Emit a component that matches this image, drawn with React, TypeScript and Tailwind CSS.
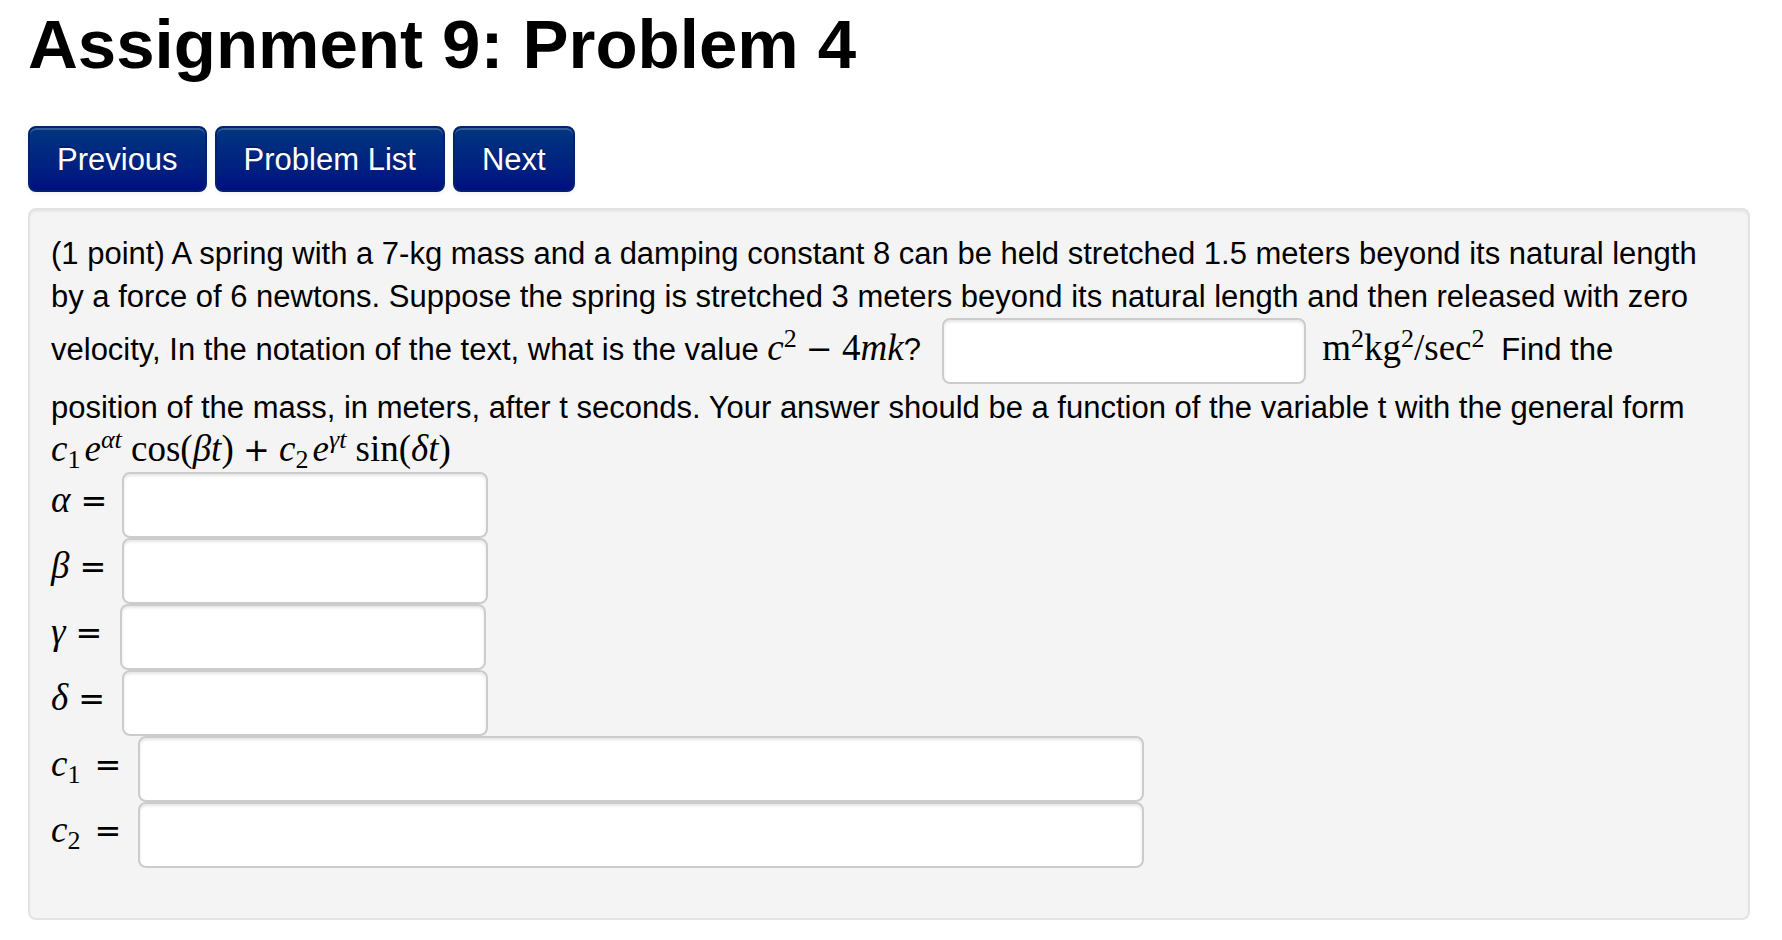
import type { ReactNode } from "react";

const navLinks = ["Previous", "Problem List", "Next"];

const fields = [
  { id: "alpha", symbol: "α", labelWidth: "w-[71px]", inputWidth: "w-[366px]" },
  { id: "beta", symbol: "β", labelWidth: "w-[71px]", inputWidth: "w-[366px]" },
  { id: "gamma", symbol: "γ", labelWidth: "w-[69px]", inputWidth: "w-[366px]" },
  { id: "delta", symbol: "δ", labelWidth: "w-[71px]", inputWidth: "w-[366px]" },
  { id: "c1", symbol: "c", sub: "1", labelWidth: "w-[87px]", inputWidth: "w-[1006px]" },
  { id: "c2", symbol: "c", sub: "2", labelWidth: "w-[87px]", inputWidth: "w-[1006px]" }
];

const inputStyle =
  "h-[66px] rounded-lg border-2 border-[#cccccc] bg-white px-3 shadow-[inset_0_2px_3px_rgba(0,0,0,0.1)] outline-none focus:border-[#52a8ec]";

function MathText({ children }: { children: ReactNode }) {
  return (
    <span className="whitespace-nowrap font-['Liberation_Serif',serif] text-[37px] leading-none">{children}</span>
  );
}

// Plus, minus and equals signs
function Op({ children }: { children: ReactNode }) {
  return <span className="font-['DejaVu_Sans',sans-serif] text-[32px] leading-none">{children}</span>;
}

function Sup({ children }: { children: ReactNode }) {
  return <sup className="text-[26px]">{children}</sup>;
}

function Sub({ children }: { children: ReactNode }) {
  return <sub className="text-[26px]">{children}</sub>;
}

export default function App() {
  return (
    <main className="px-7 pb-5 font-['Liberation_Sans',Arial,sans-serif] text-[31px] leading-[43px] text-black">
      <h1 className="pt-1 text-[69px] font-bold leading-[82px]">Assignment 9: Problem 4</h1>

      <nav className="mt-10 flex gap-2">
        {navLinks.map((label) => (
          <button
            key={label}
            className="h-[66px] rounded-lg border-2 border-[#00246b] bg-linear-to-b from-[#003580] to-[#000d80] px-[27px] text-white shadow-[inset_0_2px_0_rgba(255,255,255,0.2),0_2px_4px_rgba(0,0,0,0.05)] [text-shadow:0_-2px_0_rgba(0,0,0,0.25)]"
          >
            {label}
          </button>
        ))}
      </nav>

      <form className="mt-4 mr-1 rounded-lg border-2 border-[#e3e3e3] bg-[#f4f4f4] px-[21px] pt-[22px] pb-[50px] shadow-[inset_0_2px_2px_rgba(0,0,0,0.05)]">
        <p>
          (1 point) A spring with a 7-kg mass and a damping constant 8 can be held stretched 1.5 meters beyond its
          natural length by a force of 6 newtons. Suppose the spring is stretched 3 meters beyond its natural length
          and then released with zero velocity, In the notation of the text, what is the value{" "}
          <MathText>
            <i>c</i>
            <Sup>2</Sup> <Op>−</Op> 4<i>mk</i>
          </MathText>
          ?{" "}
          <input
            type="text"
            aria-label="Value of c squared minus 4mk"
            className={`mr-2 mb-0.5 ml-3 w-[364px] align-middle ${inputStyle}`}
          />{" "}
          <MathText>
            m<Sup>2</Sup>kg<Sup>2</Sup>/sec<Sup>2</Sup>
          </MathText>{" "}
          <span className="ml-2">Find the</span> <br />
          position of the mass, in meters, after t seconds. Your answer should be a function of the variable t with
          the general form{" "}
          <MathText>
            <i>c</i>
            <Sub>1</Sub>
            <i className="ml-1">e</i>
            <Sup>
              <i>αt</i>
            </Sup>{" "}
            cos(<i>βt</i>) <Op>+</Op> <i>c</i>
            <Sub>2</Sub>
            <i className="ml-1">e</i>
            <Sup>
              <i>γt</i>
            </Sup>{" "}
            sin(<i>δt</i>)
          </MathText>
        </p>

        {fields.map((f) => (
          <div key={f.id} className="flex">
            <label htmlFor={f.id} className={`shrink-0 pt-2 ${f.labelWidth}`}>
              <MathText>
                <i className={f.sub ? "" : "mr-2.5"}>{f.symbol}</i>
                {f.sub && (
                  <span className="mr-3.5">
                    <Sub>{f.sub}</Sub>
                  </span>
                )}
                <Op>=</Op>
              </MathText>
            </label>
            <input id={f.id} type="text" className={`min-w-0 ${f.inputWidth} ${inputStyle}`} />
          </div>
        ))}
      </form>
    </main>
  );
}
